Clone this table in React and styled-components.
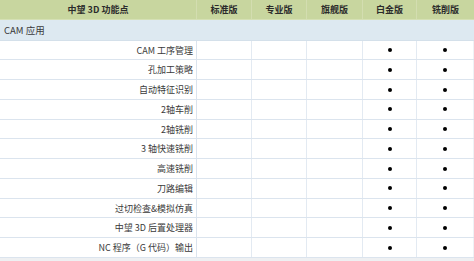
import React from 'react';
import styled, {createGlobalStyle} from 'styled-components';

const GlobalStyle = createGlobalStyle`
  html, body {
    margin: 0;
    padding: 0;
    background: #eef0f2;
  }
  body {
    font-family: "Noto Sans CJK SC", "Noto Sans", sans-serif;
    width: 474px;
    height: 261px;
    overflow: hidden;
  }
`;

const editions = ['标准版', '专业版', '旗舰版', '白金版', '铣削版'];

// which editions include the feature (index into editions)
const features = [
  {name: 'CAM 工序管理', has: [3, 4]},
  {name: '孔加工策略', has: [3, 4]},
  {name: '自动特征识别', has: [3, 4]},
  {name: '2轴车削', has: [3, 4]},
  {name: '2轴铣削', has: [3, 4]},
  {name: '3 轴快速铣削', has: [3, 4]},
  {name: '高速铣削', has: [3, 4]},
  {name: '刀路编辑', has: [3, 4]},
  {name: '过切检查&模拟仿真', has: [3, 4]},
  {name: '中望 3D 后置处理器', has: [3, 4]},
  {name: 'NC 程序（G 代码）输出', has: [3, 4]},
];

const App = () => {
  return (
    <React.Fragment>
      <GlobalStyle />
      <Table>
        <HeaderRow>
          <HeaderCell>中望 3D 功能点</HeaderCell>
          {editions.map(ed => (
            <HeaderCell key={ed}>{ed}</HeaderCell>
          ))}
        </HeaderRow>
        <SectionRow>CAM 应用</SectionRow>
        {features.map(f => (
          <Row key={f.name}>
            <NameCell>{f.name}</NameCell>
            {editions.map((ed, i) => (
              <MarkCell key={ed}>{f.has.includes(i) && <Dot />}</MarkCell>
            ))}
          </Row>
        ))}
      </Table>
    </React.Fragment>
  );
};

const cols = '197px 55px 55px 56px 54px 57px';

const Table = styled.div`
  width: 474px;
  background: #fff;
  color: #3a3a3a;
  font-size: 9px;
`;

const HeaderRow = styled.div`
  display: grid;
  grid-template-columns: ${cols};
  height: 20px;
  background: #c8d69f;
  border-bottom: 1px solid #d5e0b4;
  box-sizing: border-box;
`;

const HeaderCell = styled.div`
  display: flex;
  align-items: center;
  justify-content: center;
  font-weight: bold;
  color: #2b2b2b;
  border-right: 1px solid #d3ddb0;
  &:last-child {
    border-right: none;
  }
`;

const SectionRow = styled.div`
  height: 20.7px;
  box-sizing: border-box;
  display: flex;
  align-items: center;
  padding-left: 4px;
  background: #dde9f1;
  border-bottom: 1px solid #d4e0ea;
  font-size: 9.5px;
`;

const Row = styled.div`
  display: grid;
  grid-template-columns: ${cols};
  height: 19.75px;
  box-sizing: border-box;
  border-bottom: 1px solid #dbe4ee;
`;

const NameCell = styled.div`
  display: flex;
  align-items: center;
  justify-content: flex-end;
  padding-right: 3px;
  border-right: 1px solid #dbe4ee;
  white-space: nowrap;
`;

const MarkCell = styled.div`
  display: flex;
  align-items: center;
  justify-content: center;
  border-right: 1px solid #e3eaf2;
  &:last-child {
    border-right: 1px solid #eef2f6;
  }
`;

const Dot = styled.span`
  width: 4px;
  height: 4px;
  border-radius: 50%;
  background: #000;
`;

export default App;
